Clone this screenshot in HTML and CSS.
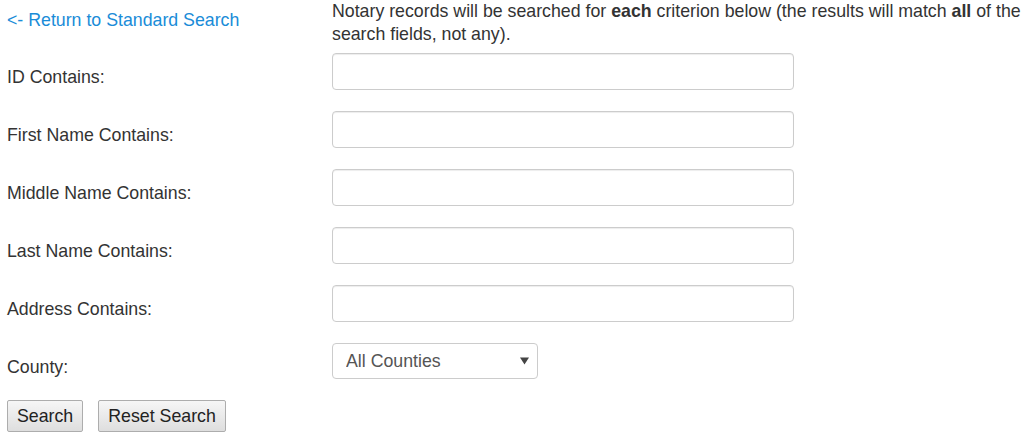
FILE: index.html
```html
<!DOCTYPE html>
<html lang="en">
<head>
<meta charset="utf-8">
<title>Advanced Notary Search</title>
<link rel="stylesheet" href="styles.css">
</head>
<body>
<form class="search-form">
  <div class="row intro-row">
    <div class="label-cell link-cell"><a href="#" class="back-link">&lt;- Return to Standard Search</a></div>
    <div class="control-cell intro">Notary records will be searched for <b>each</b> criterion below (the results will match <b>all</b> of the search fields, not any).</div>
  </div>
  <div class="row">
    <label class="label-cell" for="f-id">ID Contains:</label>
    <div class="control-cell"><input id="f-id" class="text-input" type="text"></div>
  </div>
  <div class="row">
    <label class="label-cell" for="f-first">First Name Contains:</label>
    <div class="control-cell"><input id="f-first" class="text-input" type="text"></div>
  </div>
  <div class="row">
    <label class="label-cell" for="f-middle">Middle Name Contains:</label>
    <div class="control-cell"><input id="f-middle" class="text-input" type="text"></div>
  </div>
  <div class="row">
    <label class="label-cell" for="f-last">Last Name Contains:</label>
    <div class="control-cell"><input id="f-last" class="text-input" type="text"></div>
  </div>
  <div class="row">
    <label class="label-cell" for="f-addr">Address Contains:</label>
    <div class="control-cell"><input id="f-addr" class="text-input" type="text"></div>
  </div>
  <div class="row">
    <label class="label-cell" for="f-county">County:</label>
    <div class="control-cell">
      <span class="select-wrap">
        <select id="f-county" class="select-input">
          <option>All Counties</option>
        </select>
        <svg class="select-arrow" width="9" height="8" viewBox="0 0 9 8" aria-hidden="true"><path d="M0 0.5H9L4.5 7.5Z" fill="#444"/></svg>
      </span>
    </div>
  </div>
  <div class="buttons">
    <button type="button" class="btn">Search</button>
    <button type="reset" class="btn">Reset Search</button>
  </div>
</form>
</body>
</html>
```

FILE: styles.css
```css
html, body {
  margin: 0;
  padding: 0;
  background: #fff;
}

body {
  font-family: "Liberation Sans", Arial, sans-serif;
  font-size: 17.75px;
  line-height: 23px;
  color: #333;
  width: 1024px;
  overflow: hidden;
}

.search-form {
  padding-left: 7px;
}

.row {
  display: grid;
  grid-template-columns: 325px 692px;
  margin-bottom: 21px;
}

.intro-row {
  margin-bottom: 7px;
}

.label-cell {
  padding-top: 13px;
  display: block;
}

.link-cell {
  padding-top: 9px;
}

.back-link {
  color: #1a8cd8;
  text-decoration: none;
}

.intro b {
  font-weight: bold;
}

.text-input {
  box-sizing: border-box;
  display: block;
  width: 462px;
  height: 37px;
  margin: 0;
  padding: 6px 12px;
  border: 1px solid #ccc;
  border-radius: 4px;
  box-shadow: inset 0 1px 1px rgba(0, 0, 0, 0.075);
  background: #fff;
  font: inherit;
  color: #555;
}

.select-wrap {
  position: relative;
  display: inline-block;
  vertical-align: top;
}

.select-input {
  box-sizing: border-box;
  display: block;
  width: 206px;
  height: 36px;
  margin: 0;
  padding: 0 30px 0 13px;
  border: 1px solid #ccc;
  border-radius: 4px;
  background: #fff;
  font: inherit;
  color: #555;
  appearance: none;
  -webkit-appearance: none;
}

.select-arrow {
  position: absolute;
  right: 9px;
  top: 14px;
  pointer-events: none;
}

.buttons {
  display: flex;
  gap: 15px;
}

.btn {
  box-sizing: border-box;
  height: 32px;
  margin: 0;
  padding: 0 9px;
  border: 1px solid #adadad;
  border-radius: 2px;
  background: linear-gradient(#f6f6f6, #dedede);
  font: inherit;
  color: #222;
  line-height: 30px;
}
```
